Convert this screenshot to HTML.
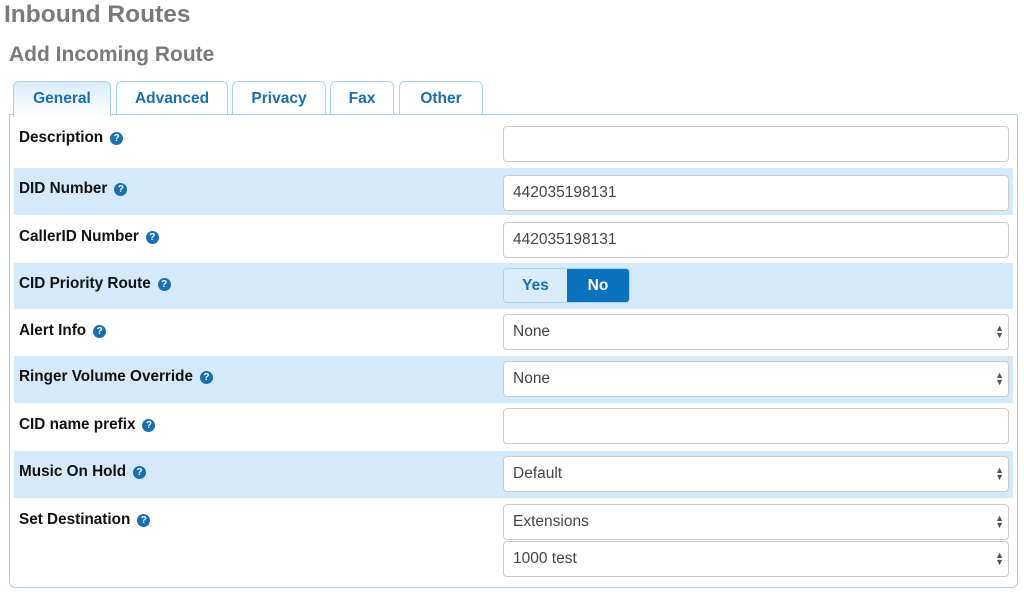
<!DOCTYPE html>
<html><head><style>
*{box-sizing:border-box;margin:0;padding:0}
body{width:1024px;height:594px;background:#fff;font-family:"Liberation Sans",sans-serif;position:relative;overflow:hidden}
.h1{position:absolute;left:4px;top:1px;font-size:24.5px;font-weight:bold;color:#7a7a7a}
.h2{position:absolute;left:9px;top:43px;font-size:21px;font-weight:bold;color:#7a7a7a}
.tab{position:absolute;top:81px;height:34px;border:1px solid #a9d4ef;border-bottom:none;border-radius:6px 6px 0 0;background:#fff;color:#1a6fb0;font-weight:bold;font-size:15.5px;text-align:center;line-height:34px}
.tab.a{background:linear-gradient(#d9ecfa,#fff);height:36px;z-index:2}
.panel{position:absolute;left:9px;top:114px;width:1009px;height:474px;border:1px solid #a9d4ef;border-radius:0 0 6px 6px}
.row{position:absolute;left:14px;width:999px}
.row.b{background:#d4e9f9}
.lbl{position:absolute;left:5px;top:12px;font-size:15.3px;font-weight:bold;color:#111}
.q{display:inline-block;width:13px;height:13px;border-radius:50%;background:#1a6fb0;color:#fff;font-size:10px;line-height:13px;text-align:center;margin-left:7px;vertical-align:1px}
.inp{position:absolute;left:489px;width:506px;height:36px;border:1px solid #ccc;border-radius:4px;background:#fff;font-size:15.5px;color:#444;padding-left:9px;line-height:34px}
.arr{position:absolute;right:4px;top:10px;font-size:9px;line-height:7px;color:#555}
</style></head><body>
<div class="h1">Inbound Routes</div>
<div class="h2">Add Incoming Route</div>
<div class="tab a" style="left:13px;width:98px">General</div>
<div class="tab" style="left:116px;width:112px">Advanced</div>
<div class="tab" style="left:232px;width:94px">Privacy</div>
<div class="tab" style="left:330px;width:64px">Fax</div>
<div class="tab" style="left:399px;width:84px">Other</div>
<div class="panel"></div>

<div class="row" style="top:117px;height:50px"><div class="lbl">Description<span class="q">?</span></div><div class="inp" style="top:9px"></div></div>
<div class="row b" style="top:168px;height:47px"><div class="lbl">DID Number<span class="q">?</span></div><div class="inp" style="top:7px">442035198131</div></div>
<div class="row" style="top:216px;height:47px"><div class="lbl">CallerID Number<span class="q">?</span></div><div class="inp" style="top:6px">442035198131</div></div>
<div class="row b" style="top:263px;height:46px"><div class="lbl">CID Priority Route<span class="q">?</span></div>
<div style="position:absolute;left:489px;top:5px;width:127px;height:35px;border:1px solid #a9d4ef;border-radius:4px;overflow:hidden;display:flex;font-weight:bold;font-size:15.5px">
<div style="width:63px;background:#d9ecfa;color:#1a6fb0;text-align:center;line-height:33px">Yes</div>
<div style="flex:1;background:#0a72bf;color:#fff;text-align:center;line-height:33px">No</div></div></div>
<div class="row" style="top:310px;height:46px"><div class="lbl">Alert Info<span class="q">?</span></div><div class="inp" style="top:4px">None<div class="arr">▲<br>▼</div></div></div>
<div class="row b" style="top:356px;height:47px"><div class="lbl">Ringer Volume Override<span class="q">?</span></div><div class="inp" style="top:5px">None<div class="arr">▲<br>▼</div></div></div>
<div class="row" style="top:404px;height:47px"><div class="lbl">CID name prefix<span class="q">?</span></div><div class="inp" style="top:4px"></div></div>
<div class="row b" style="top:451px;height:47px"><div class="lbl">Music On Hold<span class="q">?</span></div><div class="inp" style="top:5px">Default<div class="arr">▲<br>▼</div></div></div>
<div class="row" style="top:499px;height:82px"><div class="lbl">Set Destination<span class="q">?</span></div><div class="inp" style="top:5px">Extensions<div class="arr">▲<br>▼</div></div><div class="inp" style="top:42px">1000 test<div class="arr">▲<br>▼</div></div></div>
</body></html>
